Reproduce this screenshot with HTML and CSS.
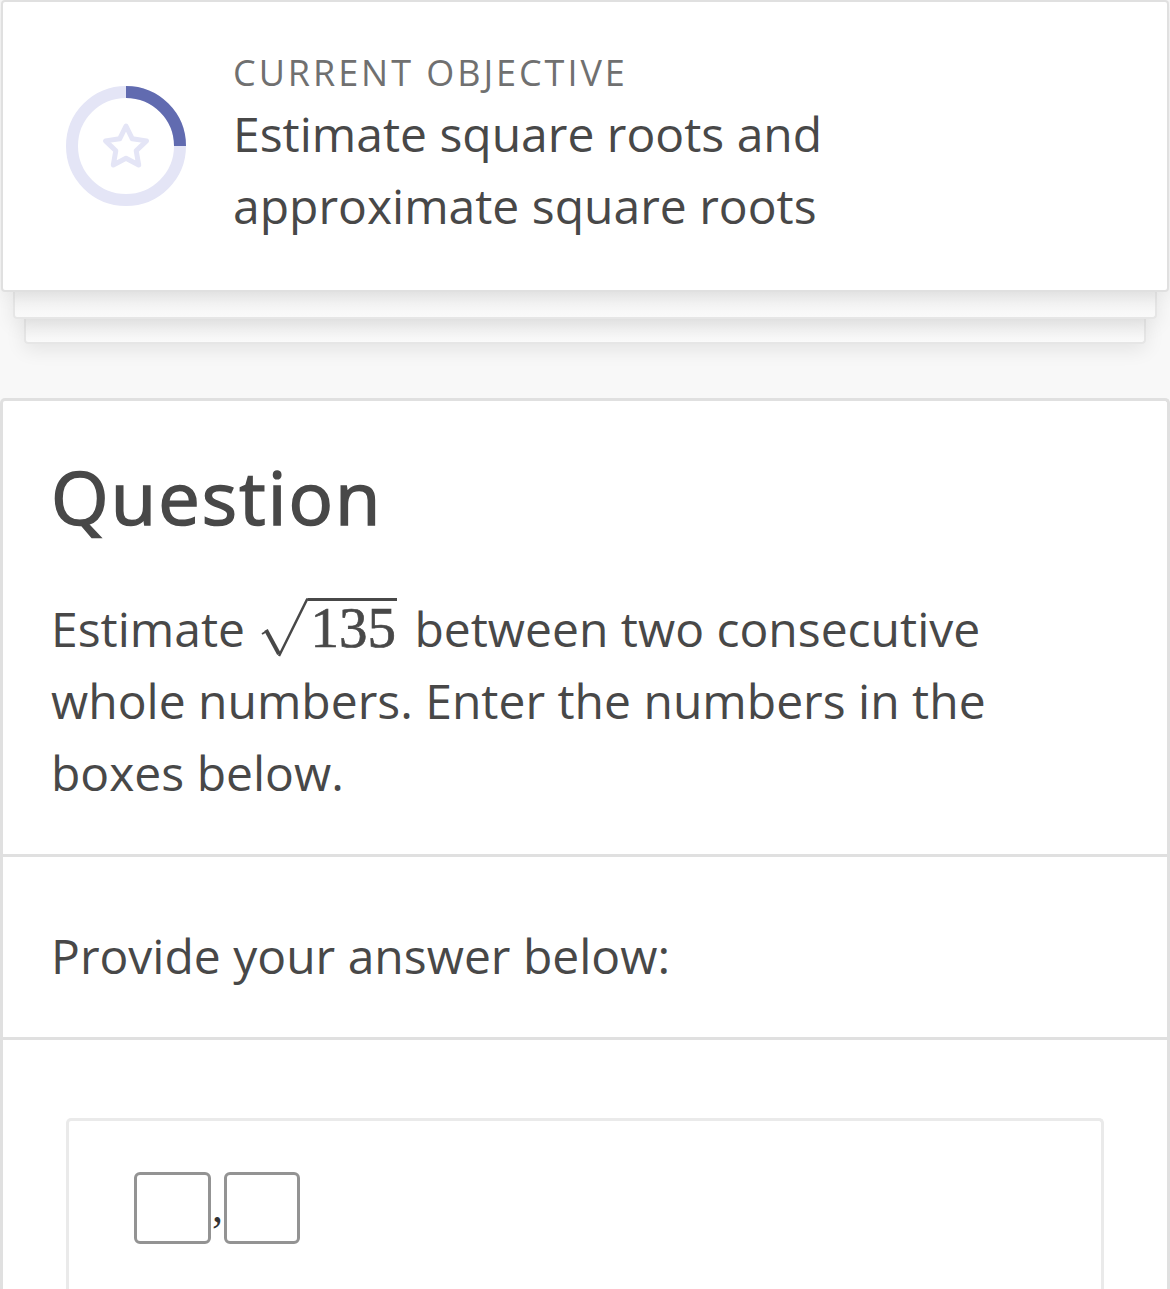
FILE: index.html
```html
<!DOCTYPE html>
<html lang="en">
<head>
<meta charset="utf-8">
<title>Question</title>
<link rel="stylesheet" href="styles.css">
</head>
<body>
<section class="objective-stack">
  <div class="objective-card">
    <svg class="progress" width="120" height="120" viewBox="0 0 120 120" aria-hidden="true">
      <circle cx="60" cy="60" r="54" fill="none" stroke="#e4e5f6" stroke-width="12"/>
      <path d="M60 6A54 54 0 0 1 114 60" fill="none" stroke="#616bb0" stroke-width="12"/>
      <path d="M60 40L66.300 52.800L80.500 54.900L70.200 64.800L72.700 79L60 72.300L47.300 79L49.800 64.800L39.500 54.900L53.700 52.800Z" fill="none" stroke="#e4e5f6" stroke-width="5" stroke-linejoin="round"/>
    </svg>
    <div class="objective-text">
      <div class="eyebrow">CURRENT OBJECTIVE</div>
      <div class="objective-title">Estimate square roots and approximate square roots</div>
    </div>
  </div>
  <div class="layer layer-one"></div>
  <div class="layer layer-two"></div>
</section>
<main class="question-card">
  <section class="question-head">
    <h1>Question</h1>
    <p class="prompt">Estimate <span class="math"><svg class="radical" width="48" height="62" viewBox="0 0 48 62" aria-hidden="true"><path d="M2 37L7 34" fill="none" stroke="#484848" stroke-width="2"/><path d="M6 33L19 57" fill="none" stroke="#484848" stroke-width="4"/><path d="M19 59L47 2.500H48" fill="none" stroke="#484848" stroke-width="2.500"/></svg><span class="radicand">135</span></span> between two consecutive whole numbers. Enter the numbers in the boxes below.</p>
  </section>
  <section class="answer-label">Provide your answer below:</section>
  <section class="answer-area">
    <div class="answer-box">
      <span class="blank blank-wide"></span><span class="comma">,</span><span class="blank"></span>
    </div>
  </section>
</main>
</body>
</html>
```
FILE: styles.css
```css
* { box-sizing: border-box; }
html, body { margin: 0; height: 1289px; overflow: hidden; }
body {
  background: #f8f8f8;
  color: #484848;
  font-family: "Open Sans", "Liberation Sans", sans-serif;
}
.objective-stack {
  height: 398px;
  padding: 0 1px;
}
.objective-card {
  position: relative;
  z-index: 3;
  height: 292px;
  display: flex;
  gap: 47px;
  padding: 53px 40px 0 63px;
  background: #fff;
  border: 2px solid #e0e0e0;
  border-radius: 4px;
  box-shadow: 0 4px 18px rgba(0,0,0,.08);
}
.progress { flex: none; margin-top: 31px; }
.objective-text { width: 640px; margin-top: -2px; }
.eyebrow {
  font-size: 36px;
  line-height: 40px;
  letter-spacing: 2.95px;
  color: #707070;
}
.objective-title {
  margin-top: 5px;
  font-size: 48px;
  line-height: 72px;
}
.layer {
  position: relative;
  background: linear-gradient(#f0f0f0, #fafafa);
  border: 2px solid #e6e6e6;
  border-top: 0;
  border-radius: 0 0 4px 4px;
  box-shadow: 0 5px 20px rgba(0,0,0,.09);
}
.layer-one { z-index: 2; height: 27px; margin: 0 12px; }
.layer-two { z-index: 1; height: 25px; margin: 0 23px; }
.question-card {
  height: 891px;
  background: #fff;
  border: 3px solid #e0e0e0;
  border-bottom: 0;
  border-radius: 5px 5px 0 0;
}
.question-head {
  height: 456px;
  padding: 50px 48px 0;
  border-bottom: 3px solid #e0e0e0;
}
h1 {
  margin: 0;
  font-size: 74px;
  line-height: 92px;
  font-weight: 400;
  letter-spacing: 2.1px;
  -webkit-text-stroke: 1.6px #484848;
}
.prompt {
  width: 1000px;
  margin: 50px 0 0;
  font-size: 48px;
  line-height: 72px;
}
.math {
  display: inline-flex;
  align-items: flex-start;
  height: 62px;
  vertical-align: -12px;
  margin: 0 5px 0 3px;
}
.radical { flex: none; display: block; }
.radicand {
  padding: 0 1px 0 2px;
  margin-top: 1px;
  border-top: 3px solid #484848;
  font-family: "Liberation Serif", "DejaVu Serif", serif;
  font-size: 57px;
  line-height: 54px;
  -webkit-text-stroke: .7px #484848;
}
.answer-label {
  height: 183px;
  padding: 63px 48px 0;
  font-size: 48px;
  line-height: 72px;
  border-bottom: 3px solid #e0e0e0;
}
.answer-area { padding: 78px 63px 0; }
.answer-box {
  display: flex;
  align-items: flex-start;
  height: 300px;
  padding: 51px 65px 0;
  border: 3px solid #eaeaea;
  border-bottom: 0;
  border-radius: 5px 5px 0 0;
}
.blank {
  flex: none;
  width: 76px;
  height: 72px;
  background: #fff;
  border: 3px solid #939393;
  border-radius: 6px;
}
.blank-wide { width: 77px; }
.comma {
  flex: none;
  width: 13px;
  margin-top: 11px;
  text-align: center;
  font-family: "Liberation Serif", serif;
  font-size: 44px;
  line-height: 50px;
  color: #333;
}
```
